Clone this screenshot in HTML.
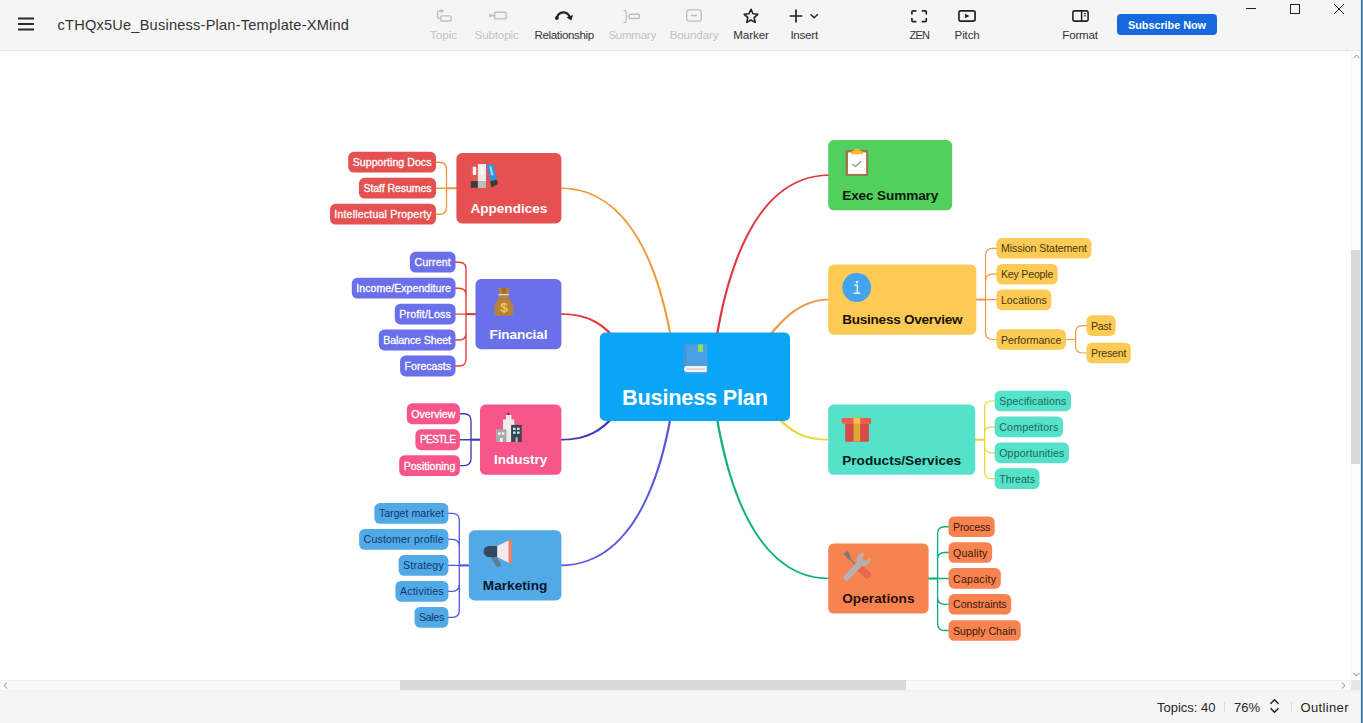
<!DOCTYPE html>
<html lang="en"><head><meta charset="utf-8"><title>cTHQx5Ue_Business-Plan-Template-XMind</title>
<style>
*{box-sizing:border-box;margin:0;padding:0}
html,body{width:1363px;height:723px;overflow:hidden;background:#fff;font-family:"Liberation Sans",sans-serif;}
#app{position:relative;width:1363px;height:723px;overflow:hidden;background:#fff}
.abs{position:absolute}
#toolbar{position:absolute;left:0;top:0;width:1360px;height:51px;background:#f5f5f5;border-bottom:1px solid #e6e6e6}
#title{position:absolute;left:57.5px;top:13.8px;height:22px;line-height:22px;font-size:14.6px;letter-spacing:0.21px;color:#333;white-space:nowrap}
.tb{position:absolute;top:0;height:50px}
.tb .lbl{position:absolute;top:28px;height:14px;line-height:14px;font-size:11.6px;white-space:nowrap;color:#333;text-align:center}
.tb.dis .lbl{color:#c2c2c2}
.tb svg{position:absolute;overflow:visible}
#subscribe{position:absolute;left:1117px;top:14px;width:100px;height:21px;border-radius:4px;background:#1569dc;color:#fff;font-weight:bold;font-size:10.9px;letter-spacing:-0.05px;line-height:22.5px;text-align:center;white-space:nowrap}
#canvas{position:absolute;left:0;top:51px;width:1351px;height:629px;background:#fff;overflow:hidden}
#vscroll{position:absolute;left:1351px;top:51px;width:9px;height:629px;background:#fcfcfc;box-shadow:inset 1px 0 0 #f4f4f4}
#vthumb{position:absolute;left:0;top:199px;width:9px;height:214px;background:#d9d9d9}
#hscroll{position:absolute;left:0;top:680px;width:1351px;height:10px;background:#fafafa;border-top:1px solid #f0f0f0}
#hthumb{position:absolute;left:400px;top:-1px;width:506px;height:10px;background:#d9d9d9}
#corner{position:absolute;left:1351px;top:680px;width:9px;height:10px;background:#e6e6e6}
#status{position:absolute;left:0;top:690px;width:1360px;height:33px;background:#f5f5f5;box-shadow:inset 0 1px 0 #efefef}
#status .t{position:absolute;top:9.7px;height:16px;line-height:16px;font-size:13px;color:#262626;white-space:nowrap}
#status .sep{position:absolute;top:11.5px;width:1px;height:10px;background:#d8d8d8}
#edge{position:absolute;left:1360px;top:0;width:3px;height:723px;background:linear-gradient(90deg,#d9f1fb 0,#d9f1fb 1px,#45719c 1px,#45719c 2px,#6a93ba 2px)}
.node{position:absolute;border-radius:5px;white-space:nowrap}
.sub{font-size:10.6px;text-align:center}
.main{font-weight:bold;font-size:13.6px;text-align:center}
.node span{position:absolute;left:0;right:0;text-align:center}

#map{position:absolute;left:0;top:-51px;width:1363px;height:723px}
#map svg.lines{position:absolute;left:0;top:0}
</style></head>
<body><div id="app">
<div id="toolbar">
<svg class="abs" style="left:18px;top:17px" width="16" height="14" viewBox="0 0 16 14"><path d="M0 1.5h16M0 7h16M0 12.5h16" stroke="#2b2b2b" stroke-width="1.8" fill="none"/></svg>
<div id="title">cTHQx5Ue_Business-Plan-Template-XMind</div>
<div class="tb dis" style="left:408.5px;width:70px"><svg style="left:27.5px;top:9px" width="17" height="14" viewBox="0 0 17 14"><path d="M5.9 1.9H3Q1.6 1.9 1.6 3.3V9.200H4.600" stroke="#bdbdbd" stroke-width="1.4" fill="none"/><circle cx="5.9" cy="1.9" r="1.600" fill="#bdbdbd"/><rect x="4.9" y="6.9" width="10.2" height="5.1" rx="1" stroke="#bdbdbd" stroke-width="1.4" fill="none"/></svg><div class="lbl" style="left:0;width:70px">Topic</div></div>
<div class="tb dis" style="left:461.5px;width:70px"><svg style="left:27.500px;top:11.300px" width="19" height="10" viewBox="0 0 19 10"><circle cx="1.500" cy="4.600" r="1.500" fill="#bdbdbd"/><path d="M2 4.600h4" stroke="#bdbdbd" stroke-width="1.300"/><rect x="5.700" y="1.300" width="11.500" height="6.600" rx="1" stroke="#bdbdbd" stroke-width="1.400" fill="none"/></svg><div class="lbl" style="left:0;width:70px;letter-spacing:-0.15px;padding-left:0.15px">Subtopic</div></div>
<div class="tb" style="left:524.0px;width:80px"><svg style="left:30.8px;top:10.3px" width="19" height="11" viewBox="0 0 19 11"><path d="M1.8 7.8C4 1 11.5 0.5 15 7" stroke="#222" stroke-width="2.1" fill="none" stroke-linecap="round"/><circle cx="1.9" cy="8" r="1.9" fill="#222"/><path d="M11.3 7.2L18 5l-1.6 5.6z" fill="#222"/></svg><div class="lbl" style="left:0;width:80px;letter-spacing:-0.37px;padding-left:0.37px">Relationship</div></div>
<div class="tb dis" style="left:597.0px;width:70px"><svg style="left:25.8px;top:9.800px" width="17" height="13" viewBox="0 0 17 13"><path d="M0.5 0.700h1.600q1 0 1 1v3.600q0 1 1.200 1.200q-1.200 0.200 -1.200 1.200v3.600q0 1 -1 1h-1.600" stroke="#bdbdbd" stroke-width="1.200" fill="none"/><rect x="6.200" y="4.300" width="10" height="4.200" rx="0.800" stroke="#bdbdbd" stroke-width="1.400" fill="none"/></svg><div class="lbl" style="left:0;width:70px;letter-spacing:-0.3px;padding-left:0.3px">Summary</div></div>
<div class="tb dis" style="left:659.0px;width:70px"><svg style="left:27px;top:9px" width="16" height="13" viewBox="0 0 16 13"><rect x="0.8" y="0.8" width="14.4" height="11.4" rx="2.4" stroke="#bdbdbd" stroke-width="1.3" fill="none" stroke-dasharray="30 0"/><path d="M5 6.5h6" stroke="#bdbdbd" stroke-width="1.5"/></svg><div class="lbl" style="left:0;width:70px;letter-spacing:-0.1px;padding-left:0.1px">Boundary</div></div>
<div class="tb" style="left:716.0px;width:70px"><svg style="left:27px;top:8px" width="16" height="15" viewBox="0 0 16 15"><path d="M8 1.3l2 4.5 4.8 0.5-3.6 3.3 1 4.8L8 12l-4.2 2.4 1-4.8L1.2 6.3 6 5.8z" stroke="#222" stroke-width="1.6" fill="none" stroke-linejoin="round"/></svg><div class="lbl" style="left:0;width:70px;letter-spacing:-0.1px;padding-left:0.1px">Marker</div></div>
<div class="tb" style="left:769.0px;width:70px"><svg style="left:20px;top:9px" width="30" height="14" viewBox="0 0 30 14"><path d="M7 0.6v12.8M0.6 7h12.8" stroke="#222" stroke-width="1.7" fill="none"/><path d="M21.6 5.2l3.6 3.6 3.6-3.6" stroke="#222" stroke-width="1.5" fill="none"/></svg><div class="lbl" style="left:0;width:70px;letter-spacing:-0.25px;padding-left:0.25px">Insert</div></div>
<div class="tb" style="left:884.0px;width:70px"><svg style="left:26.9px;top:9.800px" width="17" height="13" viewBox="0 0 17 13"><path d="M0.9 4.600V2q0-1.100 1.100-1.100h3.400M10.800 0.900h3.400q1.100 0 1.100 1.100v2.600M15.300 8V10.500q0 1.100-1.100 1.100h-3.400M5.400 11.600h-3.400q-1.100 0-1.100-1.100V8" stroke="#222" stroke-width="1.700" fill="none"/></svg><div class="lbl" style="left:0;width:70px;letter-spacing:-0.75px;padding-left:0.75px;font-size:11px">ZEN</div></div>
<div class="tb" style="left:932.0px;width:70px"><svg style="left:26px;top:10px" width="18" height="12" viewBox="0 0 18 12"><rect x="0.9" y="0.9" width="16.2" height="10.2" rx="2" stroke="#222" stroke-width="1.7" fill="none"/><path d="M7.2 3.7v4.6L11.400 6z" fill="#222"/></svg><div class="lbl" style="left:0;width:70px;letter-spacing:-0.16px;padding-left:0.16px">Pitch</div></div>
<div class="tb" style="left:1045.0px;width:70px"><svg style="left:26.5px;top:10px" width="17" height="12" viewBox="0 0 17 12"><rect x="0.9" y="0.9" width="15.2" height="10.2" rx="1.6" stroke="#222" stroke-width="1.6" fill="none"/><path d="M9.6 1v10" stroke="#222" stroke-width="1.5"/><path d="M11.8 3.7h2.400M11.800 5.900h2.400" stroke="#222" stroke-width="1"/></svg><div class="lbl" style="left:0;width:70px;letter-spacing:-0.17px;padding-left:0.17px">Format</div></div>
<div id="subscribe">Subscribe Now</div>
<svg class="abs" style="left:1240px;top:0" width="110" height="20" viewBox="0 0 110 20"><path d="M6 8.500h10" stroke="#222" stroke-width="1"/><rect x="50.5" y="4.500" width="9" height="9" fill="none" stroke="#222" stroke-width="1"/><path d="M94 4l10 10M104 4l-10 10" stroke="#222" stroke-width="1"/></svg>
</div>
<div id="canvas"><div id="map">
<svg class="lines" width="1363" height="723" viewBox="0 0 1363 723" fill="none" stroke-linecap="round"><path d="M560.4 188.95L567.54 189.26L574.39 190.15L580.97 191.6L587.29 193.58L593.34 196.09L599.13 199.09L604.67 202.58L609.98 206.52L615.04 210.9L619.86 215.71L624.46 220.91L628.84 226.5L632.99 232.45L636.93 238.75L640.66 245.36L644.18 252.28L647.49 259.48L650.61 266.94L653.54 274.64L656.28 282.57L658.84 290.69L661.21 298.99L663.41 307.46L665.44 316.06L667.31 324.78L669.02 333.6L671.18 333.2L669.44 324.34L667.54 315.59L665.47 306.94L663.23 298.44L660.81 290.09L658.22 281.93L655.43 273.96L652.46 266.2L649.29 258.69L645.91 251.44L642.33 244.46L638.54 237.79L634.53 231.43L630.3 225.42L625.84 219.76L621.15 214.49L616.22 209.62L611.05 205.18L605.63 201.18L599.95 197.65L594.02 194.61L587.83 192.07L581.38 190.07L574.66 188.62L567.67 187.74L560.4 187.45Z" fill="#f09a3c" stroke="none"/><path d="M560.4 314.9L563.43 314.96L566.34 315.09L569.13 315.3L571.8 315.59L574.35 315.94L576.8 316.36L579.14 316.85L581.38 317.39L583.52 317.99L585.57 318.65L587.53 319.35L589.41 320.11L591.2 320.91L592.92 321.75L594.57 322.63L596.15 323.54L597.66 324.49L599.12 325.47L600.53 326.47L601.88 327.51L603.18 328.56L604.45 329.63L605.67 330.72L606.86 331.82L608.02 332.93L609.16 334.06L610.84 332.34L609.66 331.22L608.45 330.1L607.21 329L605.92 327.9L604.6 326.81L603.23 325.75L601.81 324.71L600.34 323.69L598.8 322.7L597.21 321.74L595.56 320.82L593.83 319.93L592.03 319.09L590.16 318.29L588.21 317.54L586.17 316.84L584.05 316.19L581.83 315.6L579.53 315.07L577.12 314.61L574.61 314.21L572 313.88L569.27 313.62L566.43 313.43L563.48 313.33L560.4 313.3Z" fill="#e23b3b" stroke="none"/><path d="M560.4 440.5L563.48 440.47L566.44 440.36L569.27 440.18L572 439.91L574.61 439.57L577.12 439.16L579.53 438.69L581.84 438.15L584.05 437.54L586.18 436.88L588.21 436.17L590.17 435.4L592.04 434.59L593.84 433.72L595.56 432.82L597.22 431.88L598.81 430.9L600.34 429.89L601.82 428.85L603.24 427.78L604.61 426.69L605.93 425.59L607.22 424.47L608.46 423.33L609.67 422.19L610.85 421.05L609.15 419.35L608.02 420.5L606.85 421.63L605.66 422.76L604.44 423.87L603.17 424.96L601.87 426.04L600.52 427.09L599.11 428.12L597.66 429.12L596.14 430.08L594.56 431.02L592.91 431.92L591.19 432.77L589.4 433.59L587.52 434.36L585.56 435.08L583.52 435.75L581.37 436.36L579.14 436.92L576.8 437.41L574.35 437.84L571.8 438.2L569.13 438.49L566.34 438.71L563.43 438.84L560.4 438.9Z" fill="#3c3cb4" stroke="none"/><path d="M560.4 566.2L567.67 565.91L574.67 565.03L581.39 563.57L587.85 561.57L594.04 559.03L599.98 555.98L605.66 552.44L611.08 548.44L616.26 543.98L621.19 539.11L625.88 533.82L630.34 528.16L634.57 522.14L638.58 515.77L642.38 509.08L645.96 502.1L649.33 494.83L652.5 487.31L655.48 479.54L658.26 471.56L660.86 463.38L663.28 455.02L665.52 446.5L667.59 437.85L669.49 429.08L671.23 420.21L668.97 419.79L667.26 428.62L665.4 437.35L663.36 445.97L661.16 454.44L658.79 462.75L656.23 470.89L653.49 478.82L650.57 486.53L647.45 494L644.13 501.21L640.61 508.14L636.89 514.76L632.95 521.06L628.8 527.02L624.42 532.61L619.83 537.82L615 542.63L609.94 547.02L604.65 550.96L599.1 554.45L593.31 557.46L587.27 559.96L580.96 561.95L574.38 563.4L567.53 564.29L560.4 564.6Z" fill="#5658e0" stroke="none"/><path d="M829.2 174.35L821.78 174.67L814.64 175.63L807.78 177.21L801.19 179.4L794.87 182.16L788.82 185.48L783.03 189.34L777.49 193.7L772.22 198.54L767.19 203.85L762.4 209.59L757.85 215.75L753.54 222.31L749.45 229.23L745.58 236.51L741.93 244.11L738.49 252.01L735.26 260.2L732.23 268.65L729.39 277.33L726.74 286.23L724.28 295.33L721.99 304.59L719.88 314.01L717.94 323.55L716.17 333.2L718.43 333.6L720.17 323.98L722.08 314.48L724.15 305.1L726.4 295.87L728.82 286.82L731.43 277.97L734.23 269.33L737.21 260.93L740.4 252.8L743.78 244.95L747.37 237.41L751.18 230.2L755.2 223.34L759.43 216.85L763.9 210.76L768.59 205.09L773.51 199.85L778.67 195.07L784.08 190.78L789.73 186.99L795.64 183.72L801.8 180.99L808.24 178.83L814.94 177.25L821.93 176.29L829.2 175.95Z" fill="#e0383e" stroke="none"/><path d="M829.2 298.75L825.87 298.83L822.63 299.08L819.48 299.5L816.43 300.08L813.47 300.8L810.6 301.67L807.82 302.66L805.13 303.76L802.53 304.98L800.02 306.29L797.59 307.7L795.24 309.18L792.98 310.72L790.8 312.33L788.7 313.99L786.68 315.68L784.73 317.41L782.87 319.15L781.07 320.91L779.35 322.66L777.7 324.4L776.12 326.13L774.61 327.82L773.17 329.48L771.79 331.08L770.48 332.63L772.32 334.17L773.61 332.61L774.95 331L776.36 329.34L777.83 327.65L779.37 325.94L780.97 324.2L782.64 322.46L784.38 320.72L786.2 319L788.08 317.29L790.04 315.61L792.07 313.98L794.18 312.39L796.37 310.86L798.63 309.4L800.98 308.01L803.4 306.72L805.91 305.51L808.51 304.42L811.19 303.43L813.96 302.57L816.82 301.84L819.77 301.26L822.82 300.82L825.96 300.55L829.2 300.45Z" fill="#f0984a" stroke="none"/><path d="M829.2 438.9L826.23 438.84L823.38 438.71L820.65 438.49L818.04 438.2L815.54 437.84L813.14 437.41L810.85 436.92L808.66 436.36L806.56 435.75L804.55 435.08L802.64 434.36L800.8 433.59L799.04 432.78L797.36 431.92L795.75 431.02L794.2 430.09L792.71 429.12L791.29 428.12L789.91 427.1L788.59 426.05L787.31 424.97L786.07 423.88L784.87 422.77L783.71 421.64L782.57 420.51L781.46 419.36L779.74 421.04L780.9 422.18L782.08 423.33L783.3 424.46L784.56 425.58L785.86 426.69L787.2 427.77L788.6 428.84L790.04 429.88L791.54 430.89L793.1 431.87L794.73 432.82L796.42 433.72L798.18 434.58L800.02 435.4L801.93 436.17L803.93 436.88L806.01 437.54L808.18 438.15L810.45 438.69L812.81 439.16L815.27 439.57L817.83 439.91L820.5 440.18L823.28 440.36L826.18 440.47L829.2 440.5Z" fill="#ecd432" stroke="none"/><path d="M829.2 577.7L821.93 577.36L814.94 576.39L808.24 574.82L801.8 572.65L795.64 569.92L789.73 566.65L784.08 562.85L778.67 558.55L773.51 553.76L768.59 548.52L763.9 542.84L759.43 536.74L755.2 530.24L751.18 523.37L747.37 516.14L743.78 508.59L740.4 500.73L737.21 492.58L734.23 484.17L731.43 475.52L728.82 466.65L726.4 457.59L724.15 448.35L722.08 438.95L720.17 429.43L718.43 419.8L716.17 420.2L717.94 429.86L719.88 439.42L721.99 448.85L724.28 458.13L726.74 467.24L729.39 476.16L732.23 484.85L735.26 493.31L738.49 501.51L741.93 509.43L745.58 517.04L749.45 524.33L753.54 531.27L757.85 537.83L762.4 544L767.19 549.76L772.22 555.07L777.49 559.92L783.02 564.29L788.81 568.15L794.87 571.47L801.19 574.24L807.78 576.43L814.64 578.02L821.78 578.98L829.2 579.3Z" fill="#10b07a" stroke="none"/><path d="M457.4 188.2H446.5" stroke="#f09a3c" stroke-width="2.1500000000000004" stroke-linecap="butt"/><path d="M446.5 188.2V169.2Q446.5 162.2 439.5 162.2H435M446.5 188.2H435M446.5 188.2V207.2Q446.5 214.2 439.5 214.2H435" stroke="#f09a3c" stroke-width="1.35"/><path d="M476.5 314.1H466" stroke="#e23b3b" stroke-width="2.1500000000000004" stroke-linecap="butt"/><path d="M466 314.1V269.2Q466 262.2 459 262.2H454.5M466 314.1V295.2Q466 288.2 459 288.2H454.5M466 314.1H454.5M466 314.1V333Q466 340 459 340H454.5M466 314.1V359Q466 366 459 366H454.5" stroke="#e23b3b" stroke-width="1.35"/><path d="M481 439.7H471" stroke="#3c3cb4" stroke-width="2.1500000000000004" stroke-linecap="butt"/><path d="M471 439.7V420.7Q471 413.7 464 413.7H458.9M471 439.7H458.9M471 439.7V458.6Q471 465.6 464 465.6H458.9" stroke="#3c3cb4" stroke-width="1.35"/><path d="M469.8 565.4H459.3" stroke="#5658e0" stroke-width="2.1500000000000004" stroke-linecap="butt"/><path d="M459.3 565.4V520.4Q459.3 513.4 452.3 513.4H447.4M459.3 565.4V546.4Q459.3 539.4 452.3 539.4H447.4M459.3 565.4H447.4M459.3 565.4V584.3Q459.3 591.3 452.3 591.3H447.4M459.3 565.4V610.3Q459.3 617.3 452.3 617.3H447.4" stroke="#5658e0" stroke-width="1.35"/><path d="M975.3 299.6H985.5" stroke="#f0984a" stroke-width="2.0" stroke-linecap="butt"/><path d="M985.5 299.6V255.3Q985.5 248.3 992.5 248.3H997.4M985.5 299.6V281.2Q985.5 274.2 992.5 274.2H997.4M985.5 299.6H997.4M985.5 299.6V332.5Q985.5 339.5 992.5 339.5H997.4" stroke="#f0984a" stroke-width="1.2"/><path d="M974.2 439.7H984.6" stroke="#ecd432" stroke-width="2.0" stroke-linecap="butt"/><path d="M984.6 439.7V408Q984.6 401 991.6 401H995.7M984.6 439.7V433.8Q984.6 426.8 991.6 426.8H995.7M984.6 439.7V445.8Q984.6 452.8 991.6 452.8H995.7M984.6 439.7V471.7Q984.6 478.7 991.6 478.7H995.7" stroke="#ecd432" stroke-width="1.2"/><path d="M927.6 578.5H937.6" stroke="#10b07a" stroke-width="2.1500000000000004" stroke-linecap="butt"/><path d="M937.6 578.5V533.7Q937.6 526.7 944.6 526.7H949.5M937.6 578.5V559.5Q937.6 552.5 944.6 552.5H949.5M937.6 578.5H949.5M937.6 578.5V597.3Q937.6 604.3 944.6 604.3H949.5M937.6 578.5V623.5Q937.6 630.5 944.6 630.5H949.5" stroke="#10b07a" stroke-width="1.35"/><path d="M1064.9 339.5H1075.6M1075.6 339.5V332.6Q1075.6 325.6 1082.6 325.6H1087.5M1075.6 339.5V346Q1075.6 353 1082.6 353H1087.5" stroke="#f0984a" stroke-width="1.2"/><g stroke="none"><rect x="599.8" y="332.4" width="190.2" height="88.6" rx="5.6" fill="#0aa5f5"/><rect x="456.4" y="153" width="105" height="70.4" rx="5.6" fill="#e55151"/><rect x="475.5" y="279" width="85.9" height="70.2" rx="5.6" fill="#6a6fea"/><rect x="480" y="404.6" width="81.4" height="70.2" rx="5.6" fill="#f8558a"/><rect x="468.8" y="530.3" width="92.6" height="70.2" rx="5.6" fill="#51aae6"/><rect x="828.2" y="140" width="124" height="70.3" rx="5.6" fill="#52cf5e"/><rect x="828.2" y="264.5" width="148.1" height="70.2" rx="5.6" fill="#fcca55"/><rect x="828.2" y="404.6" width="147" height="70.2" rx="5.6" fill="#55e1ca"/><rect x="828.2" y="543.4" width="100.4" height="70.2" rx="5.6" fill="#f78350"/><rect x="348.2" y="151.85" width="87.8" height="20.7" rx="5.6" fill="#e55151"/><rect x="359" y="177.85" width="77" height="20.7" rx="5.6" fill="#e55151"/><rect x="330" y="203.85" width="106" height="20.7" rx="5.6" fill="#e55151"/><rect x="409.9" y="251.8" width="45.6" height="20.8" rx="5.6" fill="#6a6fea"/><rect x="351.8" y="277.8" width="103.7" height="20.8" rx="5.6" fill="#6a6fea"/><rect x="394.8" y="303.7" width="60.7" height="20.8" rx="5.6" fill="#6a6fea"/><rect x="378.8" y="329.6" width="76.7" height="20.8" rx="5.6" fill="#6a6fea"/><rect x="400.1" y="355.6" width="55.4" height="20.8" rx="5.6" fill="#6a6fea"/><rect x="406.8" y="403.25" width="53.1" height="20.9" rx="5.6" fill="#f8558a"/><rect x="415.4" y="429.25" width="44.5" height="20.9" rx="5.6" fill="#f8558a"/><rect x="399.2" y="455.15" width="60.7" height="20.9" rx="5.6" fill="#f8558a"/><rect x="374.4" y="503" width="74" height="20.8" rx="5.6" fill="#51aae6"/><rect x="359.1" y="529" width="89.3" height="20.8" rx="5.6" fill="#51aae6"/><rect x="398.6" y="555" width="49.8" height="20.8" rx="5.6" fill="#51aae6"/><rect x="395.4" y="580.9" width="53" height="20.8" rx="5.6" fill="#51aae6"/><rect x="414.5" y="606.9" width="33.9" height="20.8" rx="5.6" fill="#51aae6"/><rect x="996.4" y="238" width="95" height="20.6" rx="5.6" fill="#fcca55"/><rect x="996.4" y="263.9" width="61.3" height="20.6" rx="5.6" fill="#fcca55"/><rect x="996.4" y="289.6" width="55" height="20.6" rx="5.6" fill="#fcca55"/><rect x="996.4" y="329.2" width="69.5" height="20.6" rx="5.6" fill="#fcca55"/><rect x="994.7" y="390.65" width="76.3" height="20.7" rx="5.6" fill="#55e1ca"/><rect x="994.7" y="416.45" width="68.3" height="20.7" rx="5.6" fill="#55e1ca"/><rect x="994.7" y="442.45" width="74.3" height="20.7" rx="5.6" fill="#55e1ca"/><rect x="994.7" y="468.35" width="44.8" height="20.7" rx="5.6" fill="#55e1ca"/><rect x="948.5" y="516.4" width="46.2" height="20.6" rx="5.6" fill="#f78350"/><rect x="948.5" y="542.2" width="43.6" height="20.6" rx="5.6" fill="#f78350"/><rect x="948.5" y="568.1" width="52.3" height="20.6" rx="5.6" fill="#f78350"/><rect x="948.5" y="594" width="62.7" height="20.6" rx="5.6" fill="#f78350"/><rect x="948.5" y="620.2" width="72.2" height="20.6" rx="5.6" fill="#f78350"/><rect x="1086.5" y="315.3" width="29.1" height="20.6" rx="5.6" fill="#fcca55"/><rect x="1086.5" y="342.7" width="44.3" height="20.6" rx="5.6" fill="#fcca55"/></g></svg>
<div class="node" style="left:599.8px;top:332.4px;width:190.2px;height:88.6px"><span style="top:52.4px;height:26px;line-height:26px;font-size:21.7px;font-weight:bold;color:#fff;letter-spacing:-0.197px">Business Plan</span></div>
<div class="node main" style="left:456.4px;top:153px;width:105px;height:70.4px;color:#fff"><span style="top:46.9px;height:18px;line-height:18px;letter-spacing:-0.006px">Appendices</span></div>
<div class="node main" style="left:475.5px;top:279px;width:85.9px;height:70.2px;color:#fff"><span style="top:46.7px;height:18px;line-height:18px;letter-spacing:-0.114px">Financial</span></div>
<div class="node main" style="left:480px;top:404.6px;width:81.4px;height:70.2px;color:#fff"><span style="top:46.7px;height:18px;line-height:18px;letter-spacing:-0.028px">Industry</span></div>
<div class="node main" style="left:468.8px;top:530.3px;width:92.6px;height:70.2px;color:#0a1530"><span style="top:46.7px;height:18px;line-height:18px;letter-spacing:0.042px">Marketing</span></div>
<div class="node main" style="left:828.2px;top:140px;width:124px;height:70.3px;color:#0c1a0c"><span style="top:46.8px;height:18px;line-height:18px;letter-spacing:-0.124px">Exec Summary</span></div>
<div class="node main" style="left:828.2px;top:264.5px;width:148.1px;height:70.2px;color:#1a1405"><span style="top:46.7px;height:18px;line-height:18px;letter-spacing:-0.27px">Business Overview</span></div>
<div class="node main" style="left:828.2px;top:404.6px;width:147px;height:70.2px;color:#06201c"><span style="top:47.5px;height:18px;line-height:18px;letter-spacing:0.021px">Products/Services</span></div>
<div class="node main" style="left:828.2px;top:543.4px;width:100.4px;height:70.2px;color:#2a0e04"><span style="top:46.2px;height:18px;line-height:18px;letter-spacing:0.063px">Operations</span></div>
<div class="node sub" style="left:348.2px;top:151.8px;width:87.8px;height:20.8px;color:#fff;-webkit-text-stroke:0.3px #fff"><span style="top:0px;height:20.8px;line-height:20.8px;letter-spacing:0.031px">Supporting Docs</span></div>
<div class="node sub" style="left:359px;top:177.8px;width:77px;height:20.8px;color:#fff;-webkit-text-stroke:0.3px #fff"><span style="top:0px;height:20.8px;line-height:20.8px;letter-spacing:-0.1px">Staff Resumes</span></div>
<div class="node sub" style="left:330px;top:203.8px;width:106px;height:20.8px;color:#fff;-webkit-text-stroke:0.3px #fff"><span style="top:0px;height:20.8px;line-height:20.8px;letter-spacing:0.184px">Intellectual Property</span></div>
<div class="node sub" style="left:409.9px;top:251.8px;width:45.6px;height:20.8px;color:#fff;-webkit-text-stroke:0.3px #fff"><span style="top:0px;height:20.8px;line-height:20.8px;letter-spacing:0.182px">Current</span></div>
<div class="node sub" style="left:351.8px;top:277.8px;width:103.7px;height:20.8px;color:#fff;-webkit-text-stroke:0.3px #fff"><span style="top:0px;height:20.8px;line-height:20.8px;letter-spacing:0.026px">Income/Expenditure</span></div>
<div class="node sub" style="left:394.8px;top:303.7px;width:60.7px;height:20.8px;color:#fff;-webkit-text-stroke:0.3px #fff"><span style="top:0px;height:20.8px;line-height:20.8px;letter-spacing:0.15px">Profit/Loss</span></div>
<div class="node sub" style="left:378.8px;top:329.6px;width:76.7px;height:20.8px;color:#fff;-webkit-text-stroke:0.3px #fff"><span style="top:0px;height:20.8px;line-height:20.8px;letter-spacing:-0.094px">Balance Sheet</span></div>
<div class="node sub" style="left:400.1px;top:355.6px;width:55.4px;height:20.8px;color:#fff;-webkit-text-stroke:0.3px #fff"><span style="top:0px;height:20.8px;line-height:20.8px;letter-spacing:-0.013px">Forecasts</span></div>
<div class="node sub" style="left:406.8px;top:403.3px;width:53.1px;height:20.8px;color:#fff;-webkit-text-stroke:0.3px #fff"><span style="top:0.8px;height:20.8px;line-height:20.8px;letter-spacing:-0.007px">Overview</span></div>
<div class="node sub" style="left:415.4px;top:429.3px;width:44.5px;height:20.8px;color:#fff;-webkit-text-stroke:0.3px #fff;font-size:10px"><span style="top:0.8px;height:20.8px;line-height:20.8px;letter-spacing:-0.47px">PESTLE</span></div>
<div class="node sub" style="left:399.2px;top:455.2px;width:60.7px;height:20.8px;color:#fff;-webkit-text-stroke:0.3px #fff"><span style="top:0.8px;height:20.8px;line-height:20.8px;letter-spacing:-0.012px">Positioning</span></div>
<div class="node sub" style="left:374.4px;top:503px;width:74px;height:20.8px;color:#10366e"><span style="top:0.4px;height:20.8px;line-height:20.8px;letter-spacing:0.018px">Target market</span></div>
<div class="node sub" style="left:359.1px;top:529px;width:89.3px;height:20.8px;color:#10366e"><span style="top:0.4px;height:20.8px;line-height:20.8px;letter-spacing:0.161px">Customer profile</span></div>
<div class="node sub" style="left:398.6px;top:555px;width:49.8px;height:20.8px;color:#10366e"><span style="top:0.4px;height:20.8px;line-height:20.8px;letter-spacing:0.168px">Strategy</span></div>
<div class="node sub" style="left:395.4px;top:580.9px;width:53px;height:20.8px;color:#10366e"><span style="top:0.4px;height:20.8px;line-height:20.8px;letter-spacing:0.22px">Activities</span></div>
<div class="node sub" style="left:414.5px;top:606.9px;width:33.9px;height:20.8px;color:#10366e"><span style="top:0.4px;height:20.8px;line-height:20.8px;letter-spacing:-0.32px">Sales</span></div>
<div class="node sub" style="left:996.4px;top:237.9px;width:95px;height:20.8px;color:#47370f"><span style="top:0.5px;height:20.8px;line-height:20.8px;letter-spacing:-0.067px">Mission Statement</span></div>
<div class="node sub" style="left:996.4px;top:263.8px;width:61.3px;height:20.8px;color:#47370f"><span style="top:0.5px;height:20.8px;line-height:20.8px;letter-spacing:-0.189px">Key People</span></div>
<div class="node sub" style="left:996.4px;top:289.5px;width:55px;height:20.8px;color:#47370f"><span style="top:0.5px;height:20.8px;line-height:20.8px;letter-spacing:0.071px">Locations</span></div>
<div class="node sub" style="left:996.4px;top:329.1px;width:69.5px;height:20.8px;color:#47370f"><span style="top:0.5px;height:20.8px;line-height:20.8px;letter-spacing:-0.014px">Performance</span></div>
<div class="node sub" style="left:994.7px;top:390.6px;width:76.3px;height:20.8px;color:#1b6a55"><span style="top:0.3px;height:20.8px;line-height:20.8px;letter-spacing:0.137px">Specifications</span></div>
<div class="node sub" style="left:994.7px;top:416.4px;width:68.3px;height:20.8px;color:#1b6a55"><span style="top:0.3px;height:20.8px;line-height:20.8px;letter-spacing:0.199px">Competitors</span></div>
<div class="node sub" style="left:994.7px;top:442.4px;width:74.3px;height:20.8px;color:#1b6a55"><span style="top:0.3px;height:20.8px;line-height:20.8px;letter-spacing:0.176px">Opportunities</span></div>
<div class="node sub" style="left:994.7px;top:468.3px;width:44.8px;height:20.8px;color:#1b6a55"><span style="top:0.3px;height:20.8px;line-height:20.8px;letter-spacing:-0.017px">Threats</span></div>
<div class="node sub" style="left:948.5px;top:516.3px;width:46.2px;height:20.8px;color:#3a1606"><span style="top:0.6px;height:20.8px;line-height:20.8px;letter-spacing:-0.154px">Process</span></div>
<div class="node sub" style="left:948.5px;top:542.1px;width:43.6px;height:20.8px;color:#3a1606"><span style="top:0.6px;height:20.8px;line-height:20.8px;letter-spacing:0.231px">Quality</span></div>
<div class="node sub" style="left:948.5px;top:568px;width:52.3px;height:20.8px;color:#3a1606"><span style="top:0.6px;height:20.8px;line-height:20.8px;letter-spacing:0.26px">Capacity</span></div>
<div class="node sub" style="left:948.5px;top:593.9px;width:62.7px;height:20.8px;color:#3a1606"><span style="top:0.6px;height:20.8px;line-height:20.8px;letter-spacing:0.01px">Constraints</span></div>
<div class="node sub" style="left:948.5px;top:620.1px;width:72.2px;height:20.8px;color:#3a1606"><span style="top:0.6px;height:20.8px;line-height:20.8px;letter-spacing:0.015px">Supply Chain</span></div>
<div class="node sub" style="left:1086.5px;top:315.2px;width:29.1px;height:20.8px;color:#47370f"><span style="top:0.5px;height:20.8px;line-height:20.8px;letter-spacing:-0.276px">Past</span></div>
<div class="node sub" style="left:1086.5px;top:342.6px;width:44.3px;height:20.8px;color:#47370f"><span style="top:0.5px;height:20.8px;line-height:20.8px;letter-spacing:-0.174px">Present</span></div>
<svg class="abs" style="left:470px;top:163px" width="30" height="26" viewBox="0 0 30 26"><rect x="0.9" y="1.3" width="7" height="17" fill="#e8584f"/><rect x="0.9" y="18.100" width="7" height="6.600" fill="#3b3b3d"/><rect x="2.800" y="3.800" width="3.400" height="8.100" rx="0.6" fill="#fff"/><rect x="7.900" y="1" width="8.100" height="17.200" fill="#ececee"/><rect x="7.900" y="18.100" width="8.100" height="6.900" fill="#bdbdbf"/><rect x="10.800" y="3.800" width="2.400" height="8" rx="0.6" fill="#fff"/><path d="M16.800 1.600L23.600 1l3.300 15.600-6.800 2z" fill="#3b8fd9"/><path d="M20.100 18.600l6.800-2 1.100 4.300-6.600 3.500z" fill="#3b3b3d"/><path d="M19.300 3.400l2.100-0.300 2 8.800-2.100 0.500z" fill="#7fe3f5"/></svg>
<svg class="abs" style="left:493px;top:287px" width="22" height="30" viewBox="0 0 22 30"><path d="M5.200 0.900h11.300l-1.300 6.300h-8.700z" fill="#b5813c"/><path d="M9.400 1h1.200v6h-1.200zM11.400 1h1.200v6h-1.200z" fill="#8f6428"/><rect x="5.600" y="7" width="10.200" height="1.500" fill="#f6deb0"/><path d="M6.200 8.500h9.200c1.500 5 5.300 8.500 5.300 13.500 0 3.600-1.700 6.800-3.200 6.800H4.200C2.700 28.800 1.200 25.600 1.200 22c0-5 3.700-8.500 5-13.500z" fill="#b5813c"/><text x="10.900" y="24.600" font-family="Liberation Sans, sans-serif" font-size="13.500" fill="#f4cd4b" stroke="#f4cd4b" stroke-width="0.300" text-anchor="middle">$</text></svg>
<svg class="abs" style="left:495px;top:412px" width="28" height="31" viewBox="0 0 28 31"><rect x="12.400" y="0.800" width="1.800" height="2.400" fill="#8a1a3a"/><path d="M11 3h5.400v4.400h2.800V30H8V7.400h3z" fill="#e9edec"/><rect x="1" y="17.300" width="10.400" height="12.700" fill="#a9a9a9"/><rect x="3" y="20.400" width="2.500" height="2.300" fill="#fff"/><rect x="7" y="20.400" width="2.300" height="2.300" fill="#fff"/><rect x="4.900" y="26" width="2.800" height="4" fill="#f1f1f1"/><rect x="16.100" y="12.900" width="10.600" height="17.100" fill="#3c4449"/><rect x="18" y="15.700" width="2.600" height="2.300" fill="#bfe6f5"/><rect x="22" y="15.700" width="2.600" height="2.300" fill="#bfe6f5"/><rect x="18" y="19.500" width="2.600" height="2.300" fill="#bfe6f5"/><rect x="22" y="19.500" width="2.600" height="2.300" fill="#bfe6f5"/><rect x="20.500" y="25.200" width="2.200" height="4.800" fill="#b4b4b4"/></svg>
<svg class="abs" style="left:482px;top:539px" width="31" height="29" viewBox="0 0 31 29"><path d="M8.600 17.900l4.600-2 5.300 8.300a2.600 2.600 0 0 1-4.600 2.400z" fill="#5b7c98"/><path d="M7.100 6.900h8.400v11.200H7.100a5.600 5.600 0 0 1 0-11.200z" fill="#34495e"/><path d="M15.200 6.900L27 1.300v22.800L15.200 18.100z" fill="#f3e9ec"/><path d="M26.500 1.100h2.200a1 1 0 0 1 1 1v21.300a1 1 0 0 1-1 1h-2.200z" fill="#f0805a"/></svg>
<svg class="abs" style="left:844px;top:147px" width="26" height="30" viewBox="0 0 26 30"><rect x="1.600" y="3" width="22.500" height="26.100" rx="0.8" fill="#a1744b"/><rect x="4" y="5.400" width="18.100" height="21.500" fill="#fff"/><path d="M7.200 7.200V6.200Q7.200 3.700 10.500 3.500Q11 1 13.100 1Q15.200 1 15.700 3.500Q19 3.700 19 6.200V7.200z" fill="#f5b92e"/><path d="M8.200 17l3.300 2.500 5.400-5" stroke="#7b9b7b" stroke-width="1.300" fill="none"/></svg>
<svg class="abs" style="left:842px;top:273px" width="30" height="30" viewBox="0 0 30 30"><circle cx="14.700" cy="14.500" r="14.400" fill="#40a4ee"/><path d="M12.200 12.200h3.200v7.800M11.600 20.200h6.800" stroke="#fff" stroke-width="1.300" fill="none"/><circle cx="15" cy="9" r="1.250" fill="#fff"/></svg>
<svg class="abs" style="left:840px;top:411px" width="33" height="32" viewBox="0 0 33 32"><path d="M16.500 7.500c-2-5-8-5.500-8-2.500 0 2 4 2.500 8 2.500zM16.500 7.500c2-5 8-5.500 8-2.500 0 2-4 2.500-8 2.500z" stroke="#86d78c" stroke-width="1.300" fill="none" opacity="0.6"/><rect x="5.200" y="12.500" width="23.700" height="18.200" rx="0.8" fill="#d84a48"/><rect x="1.800" y="7.100" width="29.300" height="5.700" rx="0.8" fill="#f05b50"/><rect x="13.600" y="12.700" width="6.600" height="18" fill="#d9a832"/><rect x="13.600" y="7.100" width="6.600" height="5.700" fill="#f6c343"/></svg>
<svg class="abs" style="left:841px;top:549px" width="32" height="33" viewBox="0 0 32 33"><g opacity="0.88"><path d="M2.300 5.200l4.200-3.400 3.600 6.800-2.200 1.800z" fill="#5f7384" opacity="0.9"/><path d="M7.600 9.400l1.200-1 9 9.800-1.300 1.100z" fill="#6b7f8e"/><path d="M15.200 20.300l5.400-4.800 9 8.400a2.400 2.400 0 0 1 0.100 3.300l-2.100 2a2.400 2.400 0 0 1-3.400 0z" fill="#e9614d"/><path d="M3 27.200L16.400 13.400c-1.700-4.800 2-9.400 6.600-9.200l-2.300 4.300 1 3.100 3.600 0.800 3.600-3.400c0.900 4.800-3.500 8.700-8.300 7.700L7.600 30.700a3 3 0 0 1-4.600-3.500z" fill="#aab9bd" stroke="#aab9bd" stroke-width="0.900" stroke-linejoin="round"/></g></svg>
<svg class="abs" style="left:682px;top:343px" width="27" height="32" viewBox="0 0 27 32"><path d="M3.700 1.300h20.600a1 1 0 0 1 1 1v27.600a1 1 0 0 1-1 1H5.500a3.800 3.800 0 0 1-3.800-3.800V3.300a2 2 0 0 1 2-2z" fill="#4aa0e2"/><rect x="1.700" y="1.300" width="3" height="24" rx="1" fill="#4595d8"/><rect x="16" y="1.300" width="5" height="7.500" fill="#92da62"/><path d="M5 23.100h19.700v5.900H5a2.950 2.950 0 0 1 0-5.900z" fill="#f2f6fa"/><rect x="4.400" y="25.500" width="18.600" height="1.300" rx="0.600" fill="#d5c3c3"/></svg>
</div></div>
<div id="vscroll"><div id="vthumb"></div><svg class="abs" style="left:1.800px;top:2.600px" width="7" height="5" viewBox="0 0 7 5"><path d="M0.500 4.200L3.500 1l3 3.200" stroke="#8a8a8a" stroke-width="1" fill="none"/></svg><svg class="abs" style="left:1.800px;top:621px" width="7" height="5" viewBox="0 0 7 5"><path d="M0.500 0.800L3.500 4l3-3.200" stroke="#8a8a8a" stroke-width="1" fill="none"/></svg></div>
<div id="hscroll"><div id="hthumb"></div><svg class="abs" style="left:3px;top:0.500px" width="5" height="7" viewBox="0 0 5 7"><path d="M4.200 0.500L1 3.500l3.200 3" stroke="#8a8a8a" stroke-width="1" fill="none"/></svg><svg class="abs" style="left:1341px;top:0.500px" width="5" height="7" viewBox="0 0 5 7"><path d="M0.800 0.500L4 3.500l-3.200 3" stroke="#8a8a8a" stroke-width="1" fill="none"/></svg></div>
<div id="corner"></div>
<div id="status"><div class="t" style="left:1157px">Topics: 40</div><div class="sep" style="left:1224px"></div><div class="t" style="left:1234px">76%</div><svg class="abs" style="left:1269px;top:8px" width="11" height="16" viewBox="0 0 11 16"><path d="M1.500 5.800L5.500 1.800l4 4M1.500 10.200l4 4 4-4" stroke="#222" stroke-width="1.500" fill="none"/></svg><div class="sep" style="left:1291px"></div><div class="t" style="left:1300.5px;letter-spacing:0.35px">Outliner</div></div>
<div id="edge"></div>
</div></body></html>
